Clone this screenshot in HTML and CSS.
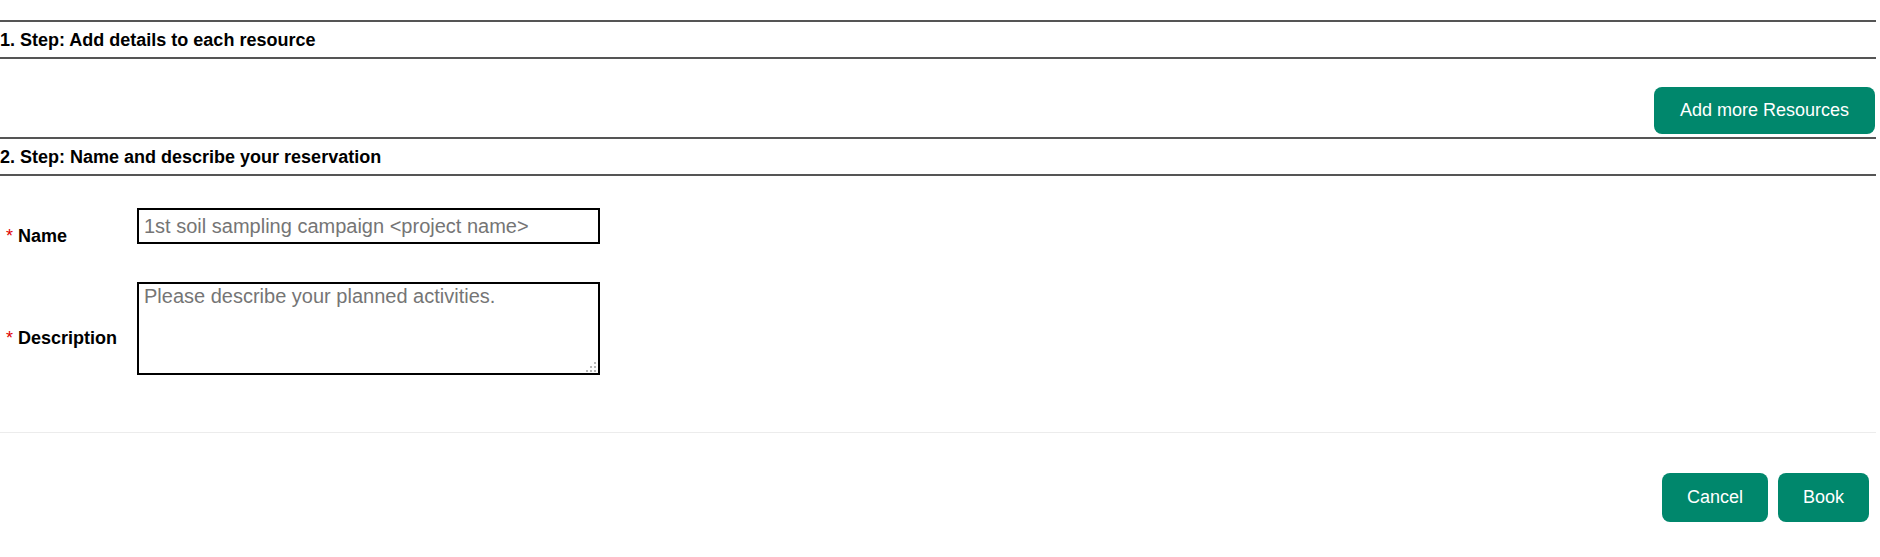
FILE: index.html
```html
<!DOCTYPE html>
<html lang="en">
<head>
<meta charset="utf-8">
<title>Reservation</title>
<link rel="stylesheet" href="styles.css">
</head>
<body>
<div class="page">
  <div class="step-heading">1. Step: Add details to each resource</div>
  <div class="resource-actions">
    <button type="button" class="btn btn-add">Add more Resources</button>
  </div>
  <div class="step-heading">2. Step: Name and describe your reservation</div>
  <form class="reservation-form">
    <div class="field-row">
      <label class="field-label" for="res-name"><span class="req">*</span> Name</label>
      <div class="field-control">
        <input id="res-name" class="text-input" type="text" placeholder="1st soil sampling campaign &lt;project name&gt;">
        <div class="field-error"></div>
      </div>
    </div>
    <div class="field-row">
      <label class="field-label" for="res-desc"><span class="req">*</span> Description</label>
      <div class="field-control">
        <div class="textarea-wrap">
          <textarea id="res-desc" class="text-area" placeholder="Please describe your planned activities."></textarea>
          <svg class="resize-grip" width="10" height="10" viewBox="0 0 10 10" aria-hidden="true">
            <rect x="8" y="0" width="2" height="2"/>
            <rect x="4" y="4" width="2" height="2"/>
            <rect x="8" y="4" width="2" height="2"/>
            <rect x="0" y="8" width="2" height="2"/>
            <rect x="4" y="8" width="2" height="2"/>
            <rect x="8" y="8" width="2" height="2"/>
          </svg>
        </div>
        <div class="field-error"></div>
      </div>
    </div>
  </form>
  <div class="divider"></div>
  <div class="footer-actions">
    <button type="button" class="btn btn-footer">Cancel</button>
    <button type="button" class="btn btn-footer">Book</button>
  </div>
</div>
</body>
</html>
```
FILE: styles.css
```css
html, body {
  margin: 0;
  padding: 0;
  background: #ffffff;
}

body {
  font-family: "Liberation Sans", Arial, sans-serif;
  color: #000000;
}

.page {
  margin-right: 4px;
  padding-top: 20px;
}

.step-heading {
  border-top: 2px solid #555555;
  border-bottom: 2px solid #555555;
  padding: 7px 0 6px 0;
  font-size: 18px;
  line-height: 22px;
  font-weight: bold;
}

.resource-actions {
  display: flex;
  justify-content: flex-end;
  padding-top: 28px;
  padding-bottom: 3px;
  padding-right: 1px;
}

.btn {
  font-family: "Liberation Sans", Arial, sans-serif;
  font-size: 18px;
  line-height: 21px;
  color: #ffffff;
  background: #00876c;
  border: none;
  border-radius: 8px;
  cursor: pointer;
  margin: 0;
}

.btn-add {
  padding: 13px 26px;
}

.reservation-form {
  padding-top: 32px;
  padding-bottom: 37px;
  display: flex;
  flex-direction: column;
  gap: 18px;
}

.field-row {
  display: grid;
  grid-template-columns: 137px 463px;
  align-items: center;
}

.field-label {
  padding-left: 6px;
  font-size: 18px;
  line-height: 21px;
  font-weight: bold;
}

.req {
  color: #e00000;
  font-weight: normal;
}

.field-control {
  display: flex;
  flex-direction: column;
}

.text-input,
.text-area {
  box-sizing: border-box;
  width: 463px;
  border: 2px solid #000000;
  border-radius: 0;
  font-family: "Liberation Sans", Arial, sans-serif;
  font-size: 20px;
  color: #000000;
  margin: 0;
  outline: none;
  background: #ffffff;
}

.text-input {
  height: 36px;
  padding: 0 5px;
}

.textarea-wrap {
  position: relative;
  width: 463px;
  height: 93px;
}

.text-area {
  display: block;
  height: 93px;
  padding: 1px 5px;
  line-height: 23px;
  resize: none;
}

.resize-grip {
  position: absolute;
  right: 4px;
  bottom: 3px;
  fill: #b8b8b8;
  pointer-events: none;
}

.text-input::placeholder,
.text-area::placeholder {
  color: #757575;
  opacity: 1;
}

.field-error {
  height: 20px;
}

.divider {
  height: 1px;
  background: #ececec;
}

.footer-actions {
  display: flex;
  justify-content: flex-end;
  gap: 10px;
  padding-top: 40px;
  padding-right: 7px;
}

.btn-footer {
  padding: 14px 25px;
}
```
